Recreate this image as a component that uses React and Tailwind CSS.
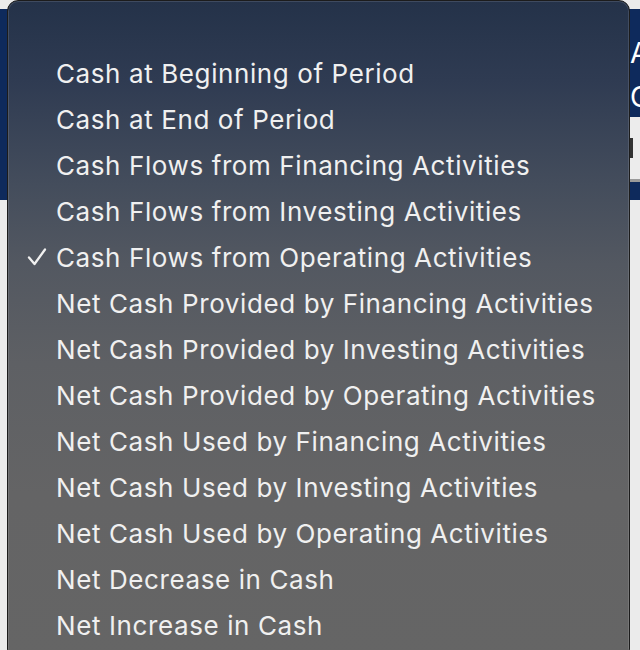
import React from "react";

const items = [
  "Cash at Beginning of Period",
  "Cash at End of Period",
  "Cash Flows from Financing Activities",
  "Cash Flows from Investing Activities",
  "Cash Flows from Operating Activities",
  "Net Cash Provided by Financing Activities",
  "Net Cash Provided by Investing Activities",
  "Net Cash Provided by Operating Activities",
  "Net Cash Used by Financing Activities",
  "Net Cash Used by Investing Activities",
  "Net Cash Used by Operating Activities",
  "Net Decrease in Cash",
  "Net Increase in Cash",
];

const selected = "Cash Flows from Operating Activities";

function Check() {
  return (
    <svg width="20" height="18" viewBox="0 0 20 18" fill="none">
      <path
        d="M2 9.5 L7.5 16 L18 1.5"
        stroke="#f0f0f0"
        strokeWidth="2.3"
        strokeLinecap="round"
        strokeLinejoin="round"
      />
    </svg>
  );
}

export default function App() {
  return (
    <div
      className="relative w-[640px] h-[650px] overflow-hidden bg-[#ebebeb]"
      style={{ fontFamily: "Inter, 'Noto Sans', sans-serif" }}
    >
      {/* page behind the menu */}
      <div className="mt-[9px] h-[191px] bg-[#0e2a5c] flex justify-end">
        <div className="w-[10px] flex flex-col">
          <div className="h-[108px] flex flex-col pt-[22px] text-white text-[28px] leading-[44px] whitespace-nowrap">
            <span>A</span>
            <span>C</span>
          </div>
          <div className="h-[65px] bg-[#ececec] border-b-[3px] border-[#9a9a9a] flex items-center">
            <span className="block w-[3px] h-[20px] bg-[#333]" />
          </div>
        </div>
      </div>

      {/* popup menu */}
      <div className="absolute left-[7px] top-0 w-[623px] h-[660px] rounded-[11px] border border-[#1c1c1c] bg-[linear-gradient(180deg,#243249_0%,#2f3b52_12%,#444d5c_28%,#535861_40%,#5e6064_55%,#646465_75%,#656565_100%)] shadow-[0_0_0_1px_rgba(255,255,255,0.12)_inset]">
        <ul className="pt-[49px] text-[#f0f0f0] text-[26px] tracking-[0.6px]">
          {items.map((label) => (
            <li key={label} className="h-[46px] flex items-center">
              <span className="w-[48px] flex justify-end pr-[9px]">
                {label === selected && <Check />}
              </span>
              <span className="whitespace-nowrap">{label}</span>
            </li>
          ))}
        </ul>
      </div>
    </div>
  );
}
